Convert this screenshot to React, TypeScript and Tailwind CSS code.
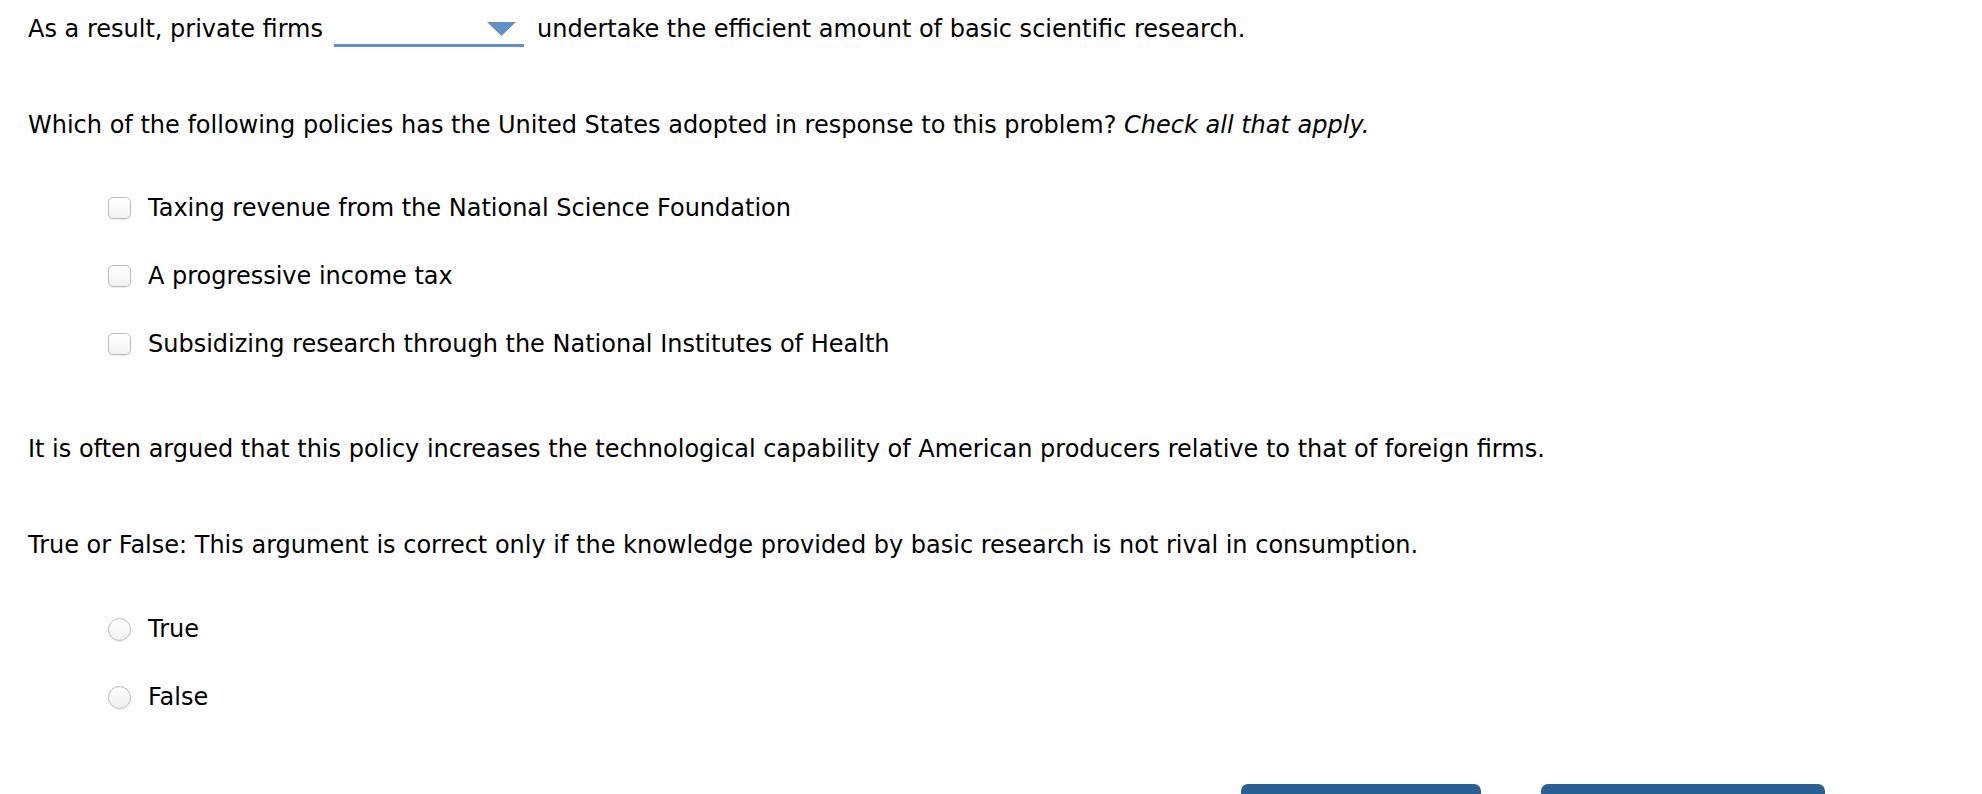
import React from "react";

const font = { fontFamily: '"DejaVu Sans", Verdana, sans-serif' };

function Checkbox() {
  return (
    <span className="inline-block w-[23px] h-[22px] rounded-[5px] border border-[#bdbdbd] bg-gradient-to-b from-white to-[#f2f2f2] shadow-[0_1px_1px_rgba(0,0,0,0.08)] shrink-0" />
  );
}

function Radio() {
  return (
    <span className="inline-block w-[23px] h-[23px] rounded-full border border-[#bdbdbd] bg-gradient-to-b from-white to-[#f0f0f0] shadow-[0_1px_1px_rgba(0,0,0,0.08)] shrink-0" />
  );
}

export default function App() {
  const checks = [
    "Taxing revenue from the National Science Foundation",
    "A progressive income tax",
    "Subsidizing research through the National Institutes of Health",
  ];
  return (
    <div className="w-[1982px] h-[794px] overflow-hidden bg-white text-black text-[24px] pl-[28px]" style={font}>
      <div className="h-[58px] flex items-center">
        <span>As a result, private firms</span>
        <span className="relative inline-block w-[190px] h-[27px] ml-[11px] mt-[8px] border-b-[3px] border-[#6091c6]">
          <svg className="absolute right-[8px] top-[2px]" width="29" height="14" viewBox="0 0 29 14">
            <polygon points="0,0 29,0 14.5,14" fill="#6091c6" />
          </svg>
        </span>
        <span className="ml-[13px]">undertake the efficient amount of basic scientific research.</span>
      </div>
      <div className="mt-[42px] h-[50px] flex items-center">
        <span>
          Which of the following policies has the United States adopted in response to this problem?{" "}
          <em className="italic">Check all that apply.</em>
        </span>
      </div>
      <div className="mt-[24px] pl-[80px]">
        {checks.map((c) => (
          <div key={c} className="h-[68px] flex items-center gap-[17px]">
            <Checkbox />
            <span>{c}</span>
          </div>
        ))}
      </div>
      <div className="mt-[46px] h-[50px] flex items-center">
        It is often argued that this policy increases the technological capability of American producers relative to that of foreign firms.
      </div>
      <div className="mt-[46px] h-[50px] flex items-center">
        True or False: This argument is correct only if the knowledge provided by basic research is not rival in consumption.
      </div>
      <div className="mt-[25px] pl-[80px]">
        {["True", "False"].map((c) => (
          <div key={c} className="h-[68px] flex items-center gap-[17px]">
            <Radio />
            <span>{c}</span>
          </div>
        ))}
      </div>
      <div className="mt-[53px] flex ml-[1213px] gap-[60px]">
        <div className="w-[240px] h-[50px] rounded-[7px] bg-[#2a6193]" />
        <div className="w-[284px] h-[50px] rounded-[7px] bg-[#2a6193]" />
      </div>
    </div>
  );
}
